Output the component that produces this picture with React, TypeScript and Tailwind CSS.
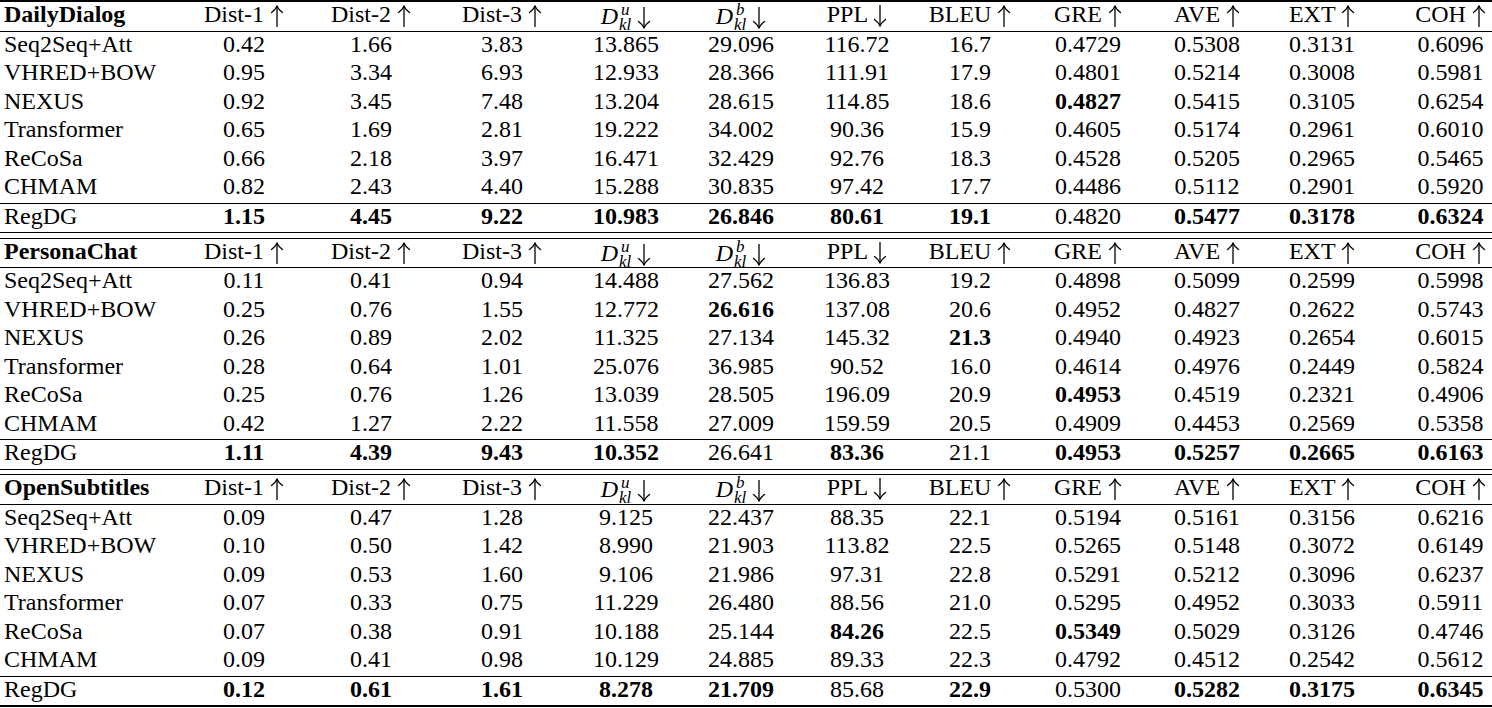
import React from 'react';

type Section = {
  name: string;
  rows: string[][];
};

// "*" prefix marks a bold (best) value
const sections: Section[] = [
  {
    name: 'DailyDialog',
    rows: [
      ['Seq2Seq+Att', '0.42', '1.66', '3.83', '13.865', '29.096', '116.72', '16.7', '0.4729', '0.5308', '0.3131', '0.6096'],
      ['VHRED+BOW', '0.95', '3.34', '6.93', '12.933', '28.366', '111.91', '17.9', '0.4801', '0.5214', '0.3008', '0.5981'],
      ['NEXUS', '0.92', '3.45', '7.48', '13.204', '28.615', '114.85', '18.6', '*0.4827', '0.5415', '0.3105', '0.6254'],
      ['Transformer', '0.65', '1.69', '2.81', '19.222', '34.002', '90.36', '15.9', '0.4605', '0.5174', '0.2961', '0.6010'],
      ['ReCoSa', '0.66', '2.18', '3.97', '16.471', '32.429', '92.76', '18.3', '0.4528', '0.5205', '0.2965', '0.5465'],
      ['CHMAM', '0.82', '2.43', '4.40', '15.288', '30.835', '97.42', '17.7', '0.4486', '0.5112', '0.2901', '0.5920'],
      ['RegDG', '*1.15', '*4.45', '*9.22', '*10.983', '*26.846', '*80.61', '*19.1', '0.4820', '*0.5477', '*0.3178', '*0.6324'],
    ],
  },
  {
    name: 'PersonaChat',
    rows: [
      ['Seq2Seq+Att', '0.11', '0.41', '0.94', '14.488', '27.562', '136.83', '19.2', '0.4898', '0.5099', '0.2599', '0.5998'],
      ['VHRED+BOW', '0.25', '0.76', '1.55', '12.772', '*26.616', '137.08', '20.6', '0.4952', '0.4827', '0.2622', '0.5743'],
      ['NEXUS', '0.26', '0.89', '2.02', '11.325', '27.134', '145.32', '*21.3', '0.4940', '0.4923', '0.2654', '0.6015'],
      ['Transformer', '0.28', '0.64', '1.01', '25.076', '36.985', '90.52', '16.0', '0.4614', '0.4976', '0.2449', '0.5824'],
      ['ReCoSa', '0.25', '0.76', '1.26', '13.039', '28.505', '196.09', '20.9', '*0.4953', '0.4519', '0.2321', '0.4906'],
      ['CHMAM', '0.42', '1.27', '2.22', '11.558', '27.009', '159.59', '20.5', '0.4909', '0.4453', '0.2569', '0.5358'],
      ['RegDG', '*1.11', '*4.39', '*9.43', '*10.352', '26.641', '*83.36', '21.1', '*0.4953', '*0.5257', '*0.2665', '*0.6163'],
    ],
  },
  {
    name: 'OpenSubtitles',
    rows: [
      ['Seq2Seq+Att', '0.09', '0.47', '1.28', '9.125', '22.437', '88.35', '22.1', '0.5194', '0.5161', '0.3156', '0.6216'],
      ['VHRED+BOW', '0.10', '0.50', '1.42', '8.990', '21.903', '113.82', '22.5', '0.5265', '0.5148', '0.3072', '0.6149'],
      ['NEXUS', '0.09', '0.53', '1.60', '9.106', '21.986', '97.31', '22.8', '0.5291', '0.5212', '0.3096', '0.6237'],
      ['Transformer', '0.07', '0.33', '0.75', '11.229', '26.480', '88.56', '21.0', '0.5295', '0.4952', '0.3033', '0.5911'],
      ['ReCoSa', '0.07', '0.38', '0.91', '10.188', '25.144', '*84.26', '22.5', '*0.5349', '0.5029', '0.3126', '0.4746'],
      ['CHMAM', '0.09', '0.41', '0.98', '10.129', '24.885', '89.33', '22.3', '0.4792', '0.4512', '0.2542', '0.5612'],
      ['RegDG', '*0.12', '*0.61', '*1.61', '*8.278', '*21.709', '85.68', '*22.9', '0.5300', '*0.5282', '*0.3175', '*0.6345'],
    ],
  },
];

const grid =
  'grid grid-cols-[181px_126px_128px_134px_114px_116px_116px_110px_126px_112px_118px_1fr] h-[28.5px] leading-[24px] items-start';

// thin LaTeX-style arrow
function Arrow({ up }: { up?: boolean }) {
  return (
    <svg
      width="14"
      height="22"
      viewBox="0 0 14 22"
      className={`inline-block align-[-5px] ${up ? '' : 'rotate-180'}`}
      fill="none"
      stroke="black"
      strokeWidth="1.3"
      strokeLinecap="round"
    >
      <path d="M7 21.5V1.5" />
      <path d="M1.5 7.5Q5.5 4.5 7 1.2Q8.5 4.5 12.5 7.5" />
    </svg>
  );
}

function Label({ text, up = true }: { text: string; up?: boolean }) {
  return (
    <div className="text-center whitespace-nowrap">
      {text} <Arrow up={up} />
    </div>
  );
}

function Dkl({ sup }: { sup: string }) {
  return (
    <div className="text-center whitespace-nowrap">
      <span className="italic">D</span>
      <span className="inline-flex flex-col align-[9px] text-[17px] leading-[15px] italic ml-[1px]">
        <span>{sup}</span>
        <span>kl</span>
      </span>{' '}
      <Arrow />
    </div>
  );
}

function Cell({ value, last }: { value: string; last?: boolean }) {
  const bold = value.startsWith('*');
  return (
    <div className={`text-center whitespace-nowrap ${last ? 'pl-[28px]' : ''} ${bold ? 'font-bold' : ''}`}>
      {bold ? value.slice(1) : value}
    </div>
  );
}

function Header({ name }: { name: string }) {
  return (
    <div className={grid}>
      <div className="pl-[4px] font-bold">{name}</div>
      <Label text="Dist-1" />
      <Label text="Dist-2" />
      <Label text="Dist-3" />
      <Dkl sup="u" />
      <Dkl sup="b" />
      <Label text="PPL" up={false} />
      <Label text="BLEU" />
      <Label text="GRE" />
      <Label text="AVE" />
      <Label text="EXT" />
      <div className="text-center whitespace-nowrap pl-[28px]">
        COH <Arrow up />
      </div>
    </div>
  );
}

function Row({ row }: { row: string[] }) {
  return (
    <div className={grid}>
      <div className="pl-[4px] whitespace-nowrap">{row[0]}</div>
      {row.slice(1).map((v, i) => (
        <Cell key={i} value={v} last={i === row.length - 2} />
      ))}
    </div>
  );
}

export default function App() {
  return (
    <div className="w-[1492px] h-[708px] bg-white text-black text-[24px] font-[family-name:'Liberation_Serif',serif] overflow-hidden">
      {sections.map((s, si) => (
        <div key={s.name}>
          {si === 0 ? (
            <div className="h-[2px] bg-black" />
          ) : (
            <div className="h-[6.5px] border-y border-black" />
          )}
          <Header name={s.name} />
          <div className="h-px bg-black" />
          {s.rows.slice(0, 6).map((r) => (
            <Row key={r[0]} row={r} />
          ))}
          <div className="h-px bg-black" />
          <Row row={s.rows[6]} />
        </div>
      ))}
      <div className="h-[2px] bg-black" />
    </div>
  );
}
